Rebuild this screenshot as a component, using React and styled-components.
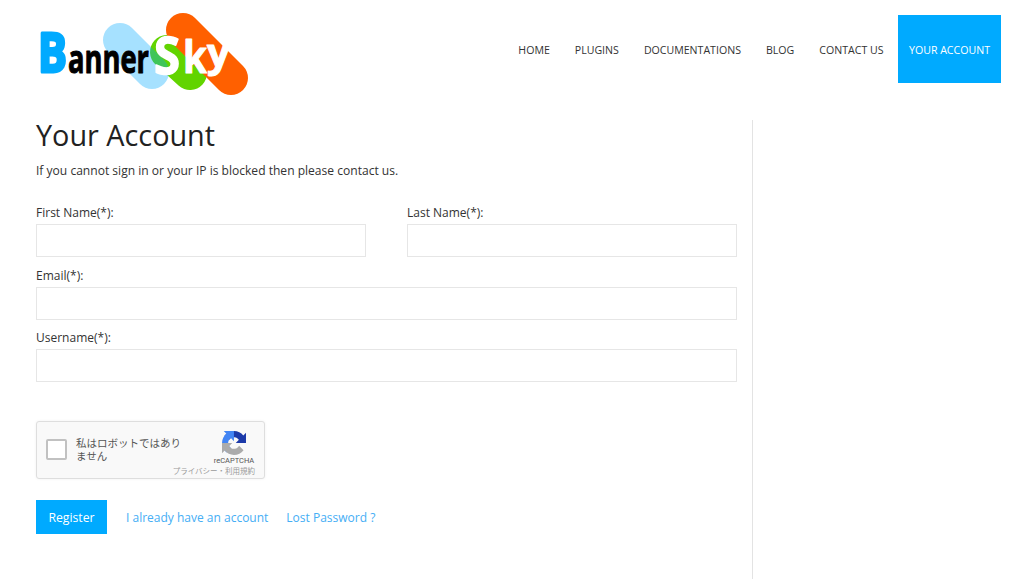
import React from 'react'
import styled, { createGlobalStyle } from 'styled-components'

const navItems = ['HOME', 'PLUGINS', 'DOCUMENTATIONS', 'BLOG', 'CONTACT US']

const App = () => {
    return (
        <Page>
            <GlobalStyle />
            <Header>
                <Logo />
                <Nav>
                    {navItems.map((item) => <NavLink key={item} href="#">{item}</NavLink>)}
                    <ActiveLink href="#">YOUR ACCOUNT</ActiveLink>
                </Nav>
            </Header>

            <Main>
                <Content>
                    <Title>Your Account</Title>
                    <Intro>If you cannot sign in or your IP is blocked then please contact us.</Intro>

                    <Row>
                        <Field>
                            <Label>First Name(*):</Label>
                            <Input />
                        </Field>
                        <Field>
                            <Label>Last Name(*):</Label>
                            <Input />
                        </Field>
                    </Row>
                    <Field>
                        <Label>Email(*):</Label>
                        <Input />
                    </Field>
                    <Field>
                        <Label>Username(*):</Label>
                        <Input />
                    </Field>

                    <Captcha>
                        <CheckBox />
                        <CaptchaText>私はロボットではありません</CaptchaText>
                        <CaptchaBrand>
                            <CaptchaIcon />
                            <BrandName>reCAPTCHA</BrandName>
                        </CaptchaBrand>
                        <BrandLinks>プライバシー・利用規約</BrandLinks>
                    </Captcha>

                    <Actions>
                        <Register>Register</Register>
                        <TextLink href="#">I already have an account</TextLink>
                        <TextLink href="#">Lost Password ?</TextLink>
                    </Actions>
                </Content>
            </Main>
        </Page>
    )
}

export default App

const Logo = () => (
    <LogoSvg viewBox="0 0 214 86" width="214" height="86">
        <g fill="none" strokeLinecap="round" strokeWidth="34">
            <line x1="131" y1="39" x2="154" y2="60" stroke="#62d400" />
            <line x1="84" y1="27" x2="116" y2="59" stroke="#00aaff" strokeOpacity="0.35" />
            <line x1="147" y1="17" x2="195" y2="65" stroke="#ff6000" />
        </g>
        <LogoText x="2" y="59" fontSize="54" fill="#00aaff" stroke="#00aaff" strokeWidth="3" textLength="29" lengthAdjust="spacingAndGlyphs">B</LogoText>
        <LogoText x="32" y="60" fontSize="40" fill="#000" stroke="#000" strokeWidth="1" textLength="81" lengthAdjust="spacingAndGlyphs">anner</LogoText>
        <LogoText x="118" y="61" fontSize="52" fill="#fff" stroke="#fff" strokeWidth="1.5" textLength="26" lengthAdjust="spacingAndGlyphs">S</LogoText>
        <LogoText x="147" y="60" fontSize="44" fill="#fff" stroke="#fff" strokeWidth="1" textLength="24" lengthAdjust="spacingAndGlyphs">k</LogoText>
        <LogoText x="171" y="54" fontSize="39" fill="#fff" stroke="#fff" strokeWidth="1" textLength="23" lengthAdjust="spacingAndGlyphs">y</LogoText>
    </LogoSvg>
)

const CaptchaIcon = () => (
    <svg viewBox="0 0 64 64" width="24" height="24">
        <path d="M64 31.955l-.033-1.37V4.687l-7.16 7.16C50.948 4.674 42.033.093 32.05.093c-10.4 0-19.622 4.96-25.458 12.64l11.736 11.86a15.55 15.55 0 0 1 4.754-5.334c2.05-1.6 4.952-2.906 8.968-2.906.485 0 .86.057 1.135.163 4.976.393 9.288 3.14 11.828 7.124l-8.307 8.307c10.522-.04 22.4-.066 27.295.006" fill="#1c3aa9" />
        <path d="M31.957.002l-1.37.033H4.687l7.16 7.16C4.674 13.053.093 21.968.093 31.95c0 10.4 4.96 19.622 12.64 25.458l11.86-11.736a15.55 15.55 0 0 1-5.334-4.754c-1.6-2.05-2.906-4.952-2.906-8.968 0-.485.057-.86.163-1.135.393-4.976 3.14-9.288 7.124-11.828l8.307 8.307c-.04-10.522-.066-22.4.006-27.295" fill="#4285f4" />
        <path d="M.002 32.045l.033 1.37v25.898l7.16-7.16c5.857 7.173 14.772 11.754 24.755 11.754 10.4 0 19.622-4.96 25.458-12.64l-11.736-11.86a15.55 15.55 0 0 1-4.754 5.334c-2.05 1.6-4.952 2.906-8.968 2.906-.485 0-.86-.057-1.135-.163-4.976-.393-9.288-3.14-11.828-7.124l8.307-8.307c-10.522.04-22.4.066-27.295-.006" fill="#ababab" />
    </svg>
)

const GlobalStyle = createGlobalStyle`
    body {
        margin: 0;
        background: #fff;
        font-family: "Open Sans", sans-serif;
        color: #222;
    }
`;

const Page = styled.div`
    width: 1024px;
    height: 579px;
    overflow: hidden;
`;

const Header = styled.header`
    height: 120px;
    padding: 15px 23px 0 36px;
    box-sizing: border-box;
    display: flex;
    justify-content: space-between;
    align-items: flex-start;
`;

const LogoSvg = styled.svg`
    display: block;
    margin-top: -2px;
`;

const LogoText = styled.text`
    font-family: "Open Sans", sans-serif;
    font-weight: 700;
    stroke-linejoin: round;
`;

const Nav = styled.nav`
    display: flex;
    align-items: center;
    height: 68px;
`;

const NavLink = styled.a`
    padding: 1px 12.5px 0;
    font-size: 10.6px;
    color: #333;
    text-decoration: none;
`;

const ActiveLink = styled(NavLink)`
    height: 68px;
    width: 103px;
    box-sizing: border-box;
    margin-left: 2px;
    padding: 1px 0 0;
    display: flex;
    align-items: center;
    justify-content: center;
    background: #00aaff;
    color: #fff;
`;

const Main = styled.main`
    display: flex;
    height: 459px;
    padding-left: 36px;
`;

const Content = styled.section`
    width: 701px;
    padding-right: 15px;
    border-right: 1px solid #e3e3e3;
`;

const Title = styled.h1`
    margin: 0;
    font-size: 28.8px;
    line-height: 30px;
    font-weight: 400;
    color: #222;
`;

const Intro = styled.p`
    margin: 10px 0 19px;
    font-size: 12.07px;
    line-height: 22px;
    color: #333;
`;

const Row = styled.div`
    display: flex;
    gap: 41px;
`;

const Field = styled.div`
    flex: 1;
    margin-bottom: 6.6px;
`;

const Label = styled.label`
    display: block;
    font-size: 12px;
    line-height: 24px;
    margin-bottom: -1px;
    color: #333;
`;

const Input = styled.input`
    display: block;
    width: 100%;
    height: 33px;
    box-sizing: border-box;
    border: 1px solid #e6e6e6;
    background: #fff;
`;

const Captcha = styled.div`
    position: relative;
    width: 229px;
    height: 58px;
    margin-top: 39px;
    box-sizing: border-box;
    border: 1px solid #dedede;
    border-radius: 3px;
    background: #f9f9f9;
    box-shadow: 0 0 3px rgba(0, 0, 0, 0.06);
`;

const CheckBox = styled.div`
    position: absolute;
    left: 9px;
    top: 17px;
    width: 21px;
    height: 21px;
    box-sizing: border-box;
    border: 2px solid #c1c1c1;
    border-radius: 2px;
    background: #fff;
`;

const CaptchaText = styled.div`
    position: absolute;
    left: 39px;
    top: 14px;
    width: 110px;
    font-family: "Noto Sans CJK JP", sans-serif;
    font-size: 10.5px;
    line-height: 13px;
    color: #555;
`;

const CaptchaBrand = styled.div`
    position: absolute;
    right: 9px;
    top: 9px;
    width: 42px;
    display: flex;
    flex-direction: column;
    align-items: center;
`;

const BrandName = styled.div`
    margin-top: 1px;
    font-family: "Roboto", sans-serif;
    font-size: 7.5px;
    line-height: 10px;
    color: #555;
`;

const BrandLinks = styled.div`
    position: absolute;
    right: 9px;
    top: 44px;
    font-family: "Noto Sans CJK JP", sans-serif;
    font-size: 7.5px;
    line-height: 10px;
    color: #999;
`;

const Actions = styled.div`
    display: flex;
    align-items: center;
    margin-top: 21px;
`;

const Register = styled.button`
    width: 71px;
    height: 34px;
    margin-right: 19px;
    padding: 0;
    border: none;
    background: #00aaff;
    color: #fff;
    font-family: "Open Sans", sans-serif;
    font-size: 12.2px;
`;

const TextLink = styled.a`
    margin-right: 18px;
    font-size: 12px;
    color: #45aef5;
    text-decoration: none;
`;
